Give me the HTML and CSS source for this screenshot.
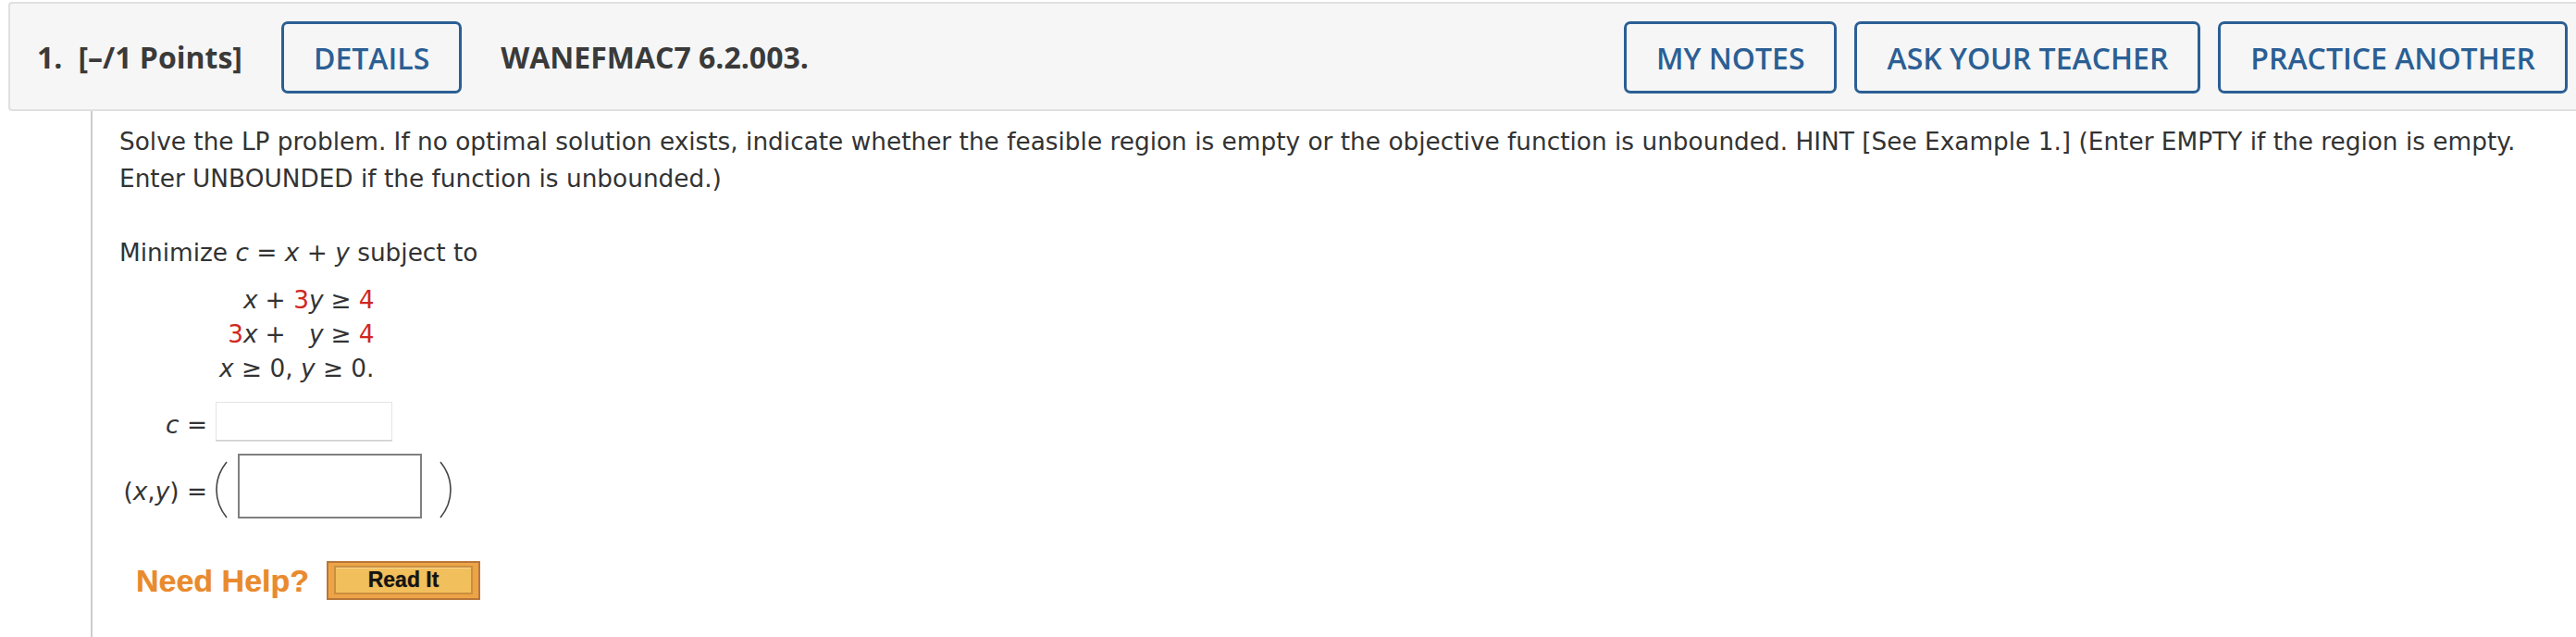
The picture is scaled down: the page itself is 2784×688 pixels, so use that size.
FILE: index.html
```html
<!DOCTYPE html>
<html lang="en">
<head>
<meta charset="utf-8">
<title>WANEFMAC7 6.2.003</title>
<link rel="stylesheet" href="styles.css">
</head>
<body>
<div class="question">
  <div class="qhead">
    <span class="qnum">1.</span>
    <span class="qpts">[–/1 Points]</span>
    <button class="btn">DETAILS</button>
    <span class="qid">WANEFMAC7 6.2.003.</span>
    <div class="actions">
      <button class="btn">MY NOTES</button>
      <button class="btn">ASK YOUR TEACHER</button>
      <button class="btn">PRACTICE ANOTHER</button>
    </div>
  </div>
  <div class="qbody">
    <p class="prompt">Solve the LP problem. If no optimal solution exists, indicate whether the feasible region is empty or the objective function is unbounded. HINT [See Example 1.] (Enter EMPTY if the region is empty.<br>Enter UNBOUNDED if the function is unbounded.)</p>
    <p class="objective">Minimize <i>c</i> = <i>x</i> + <i>y</i> subject to</p>
    <div class="constraints">
      <div class="crow">
        <span class="c1"><i>x</i></span><span class="op">+</span><span class="c3"><span class="red">3</span><i>y</i></span><span class="op">≥</span><span class="c5 red">4</span>
      </div>
      <div class="crow">
        <span class="c1"><span class="red">3</span><i>x</i></span><span class="op">+</span><span class="c3"><i>y</i></span><span class="op">≥</span><span class="c5 red">4</span>
      </div>
      <div class="crow3"><i>x</i> ≥ 0, <i>y</i> ≥ 0.</div>
    </div>
    <div class="answers">
      <span class="lbl"><i>c</i> =</span>
      <div class="field"><span class="input-c"></span></div>
      <span class="lbl lbl2">(<i>x</i>,<i>y</i>) =</span>
      <div class="field pair">
        <svg class="paren" width="14" height="62" viewBox="0 0 14 62"><path d="M12 1 C3 12 1 22 1 31 C1 40 3 50 12 61" fill="none" stroke="#444" stroke-width="1.6"/></svg>
        <span class="input-xy"></span>
        <svg class="paren" width="14" height="62" viewBox="0 0 14 62"><path d="M2 1 C11 12 13 22 13 31 C13 40 11 50 2 61" fill="none" stroke="#444" stroke-width="1.6"/></svg>
      </div>
    </div>
    <div class="help">
      <span class="needhelp">Need Help?</span>
      <span class="readit"><span class="readit-in">Read It</span></span>
    </div>
  </div>
</div>
</body>
</html>
```

FILE: styles.css
```css
html, body {
  margin: 0;
  padding: 0;
  background: #ffffff;
}

body {
  font-family: "DejaVu Sans", Verdana, sans-serif;
  color: #333333;
  overflow: hidden;
}

.question {
  min-height: 688px;
  display: flex;
  flex-direction: column;
}

.qhead {
  margin: 2px 0 0 9px;
  height: 114px;
  padding: 0 9px 0 29px;
  border: 2px solid #e0e0e0;
  border-right: none;
  border-radius: 4px 0 0 4px;
  background: #f6f6f6;
  display: flex;
  align-items: center;
  font-family: "Open Sans", sans-serif;
  font-size: 32px;
  color: #3a3a3a;
}

.qnum,
.qpts,
.qid {
  font-weight: 700;
}

.qnum {
  margin-right: 17px;
}

.qpts {
  margin-right: 42px;
}

.qid {
  margin-left: 42px;
}

.btn {
  height: 78px;
  margin-top: 2px;
  padding: 0 32px;
  border: 3px solid #2b5f94;
  border-radius: 7px;
  background: transparent;
  color: #2b5f94;
  font-family: "Open Sans", sans-serif;
  font-size: 32px;
  font-weight: 600;
}

.actions {
  margin-left: auto;
  display: flex;
  gap: 19px;
}

.qbody {
  flex: 1;
  margin-left: 98px;
  border-left: 2px solid #cccccc;
  padding: 13px 0 0 29px;
  font-size: 26.35px;
  line-height: 40px;
}

.prompt,
.objective {
  margin: 0;
}

.objective {
  margin-top: 40px;
}

i {
  font-style: italic;
}

.red {
  color: #d0271d;
}

.constraints {
  margin: 13px 0 0 108px;
  display: flex;
  flex-direction: column;
  align-items: flex-end;
  width: max-content;
  line-height: 37px;
}

.crow {
  display: grid;
  grid-template-columns: 33px 22px 33px 22px 17px;
  column-gap: 8px;
}

.c1,
.c3,
.c5 {
  text-align: right;
}

.op {
  text-align: center;
}

.answers {
  margin-top: 17px;
  display: grid;
  grid-template-columns: 95px auto;
  column-gap: 9px;
  row-gap: 14px;
  align-items: center;
}

.lbl {
  justify-self: end;
  white-space: nowrap;
  line-height: 30px;
  padding-top: 8px;
}

.lbl2 {
  padding-top: 12px;
}

.field {
  display: flex;
  align-items: center;
}

.input-c {
  display: block;
  width: 189px;
  height: 40px;
  border: 1px solid #e4e4e4;
  border-bottom-color: #cfcfcf;
  box-shadow: 0 1px 0 #e0e0e0;
  background: #ffffff;
}

.pair .paren:first-child {
  margin: 8px 10px 0 0;
}

.pair .paren:last-child {
  margin: 8px 0 0 18px;
}

.input-xy {
  display: block;
  width: 195px;
  height: 66px;
  border: 2px solid #808080;
  background: #ffffff;
}

.help {
  margin-top: 46px;
  padding-left: 18px;
  display: flex;
  align-items: center;
  gap: 19px;
}

.needhelp {
  font-family: "Liberation Sans", Arial, sans-serif;
  font-weight: 700;
  font-size: 34px;
  line-height: 40px;
  color: #e98a2e;
  text-shadow: 0 0 1px rgba(233, 138, 46, 0.6);
}

.readit {
  display: flex;
  box-sizing: border-box;
  width: 166px;
  height: 42px;
  padding: 3px 6px 4px 6px;
  border: 2px solid #b6773a;
  background: #eea446;
}

.readit-in {
  flex: 1;
  display: flex;
  align-items: center;
  justify-content: center;
  border: 2px solid #c98f3e;
  background: #f2bf5d;
  box-shadow: inset 0 1px 0 #f7d690;
  font-family: "Liberation Sans", Arial, sans-serif;
  font-weight: 700;
  font-size: 23px;
  color: #141414;
  line-height: 1;
  text-shadow: 0 0 1px rgba(0, 0, 0, 0.5);
}
```
